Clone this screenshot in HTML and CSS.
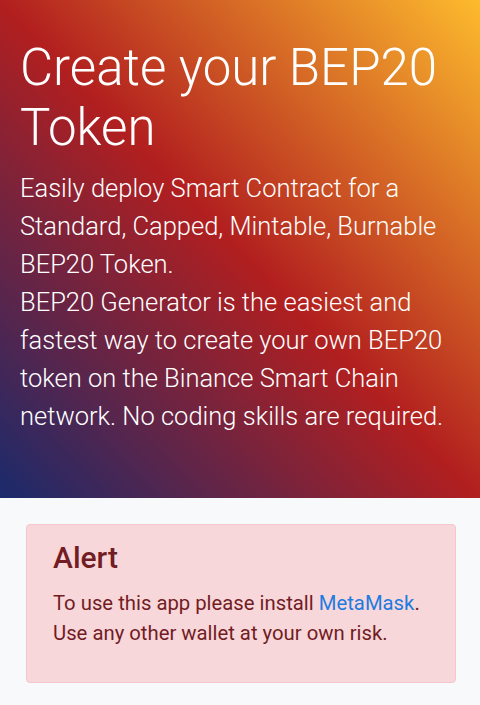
FILE: index.html
```html
<!DOCTYPE html>
<html>
  <head>
    <meta charset="UTF-8" />
    <title>BEP20 Generator</title>
    <link rel="stylesheet" href="styles.css">
  </head>
  <body>
    <header class="hero">
      <h1 class="hero-title">Create your BEP20 Token</h1>
      <p class="hero-lead">
        Easily deploy Smart Contract for a Standard, Capped, Mintable, Burnable BEP20 Token.<br />
        BEP20 Generator is the easiest and fastest way to create your own BEP20 token on the Binance Smart Chain network. No coding skills are required.
      </p>
    </header>
    <main class="content">
      <div class="alert">
        <h4 class="alert-heading">Alert</h4>
        <p class="alert-text">
          To use this app please install <a href="#">MetaMask</a>.<br />
          Use any other wallet at your own risk.
        </p>
      </div>
    </main>
  </body>
</html>
```

FILE: styles.css
```css
body {
  margin: 0;
  font-family: Roboto, "Liberation Sans", sans-serif;
  background-color: #f8f9fa;
}

.hero {
  background: linear-gradient(to top right, #1a2a6c, #b21f1f, #fdbb2d);
  color: white;
  padding: 38px 20px 63px;
}

.hero-title {
  margin: 0 0 11px;
  font-size: 51px;
  font-weight: 300;
  line-height: 60px;
}

.hero-lead {
  margin: 0;
  font-size: 25.5px;
  font-weight: 300;
  line-height: 38px;
}

.content {
  padding: 26px 24px 26px 26px;
}

.alert {
  background-color: #f8d7da;
  border: 1px solid #f5c6cb;
  border-radius: 4px;
  color: #721c24;
  padding: 15px 26px 19px;
}

.alert-heading {
  margin: 0 0 12px;
  font-size: 30px;
  font-weight: 500;
  line-height: 36px;
}

.alert-text {
  margin: 0 0 15px;
  font-size: 20.3px;
  line-height: 30px;
}

.alert-text a {
  color: #1e7be0;
  text-decoration: none;
}
```
